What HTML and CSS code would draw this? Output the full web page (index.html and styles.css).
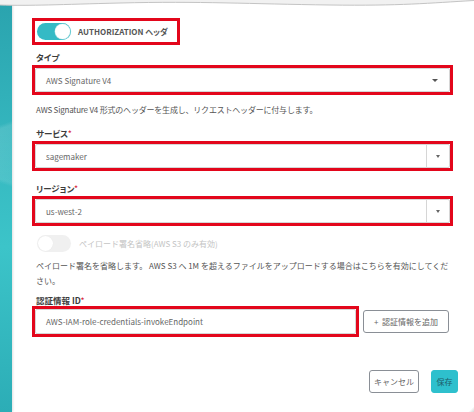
FILE: index.html
```html
<!DOCTYPE html>
<html lang="ja">
<head>
<meta charset="utf-8">
<link rel="stylesheet" href="styles.css">
</head>
<body>
<div class="page">
  <div class="strip"></div>
  <div class="main">
    <div class="hl toggle-box">
      <span class="toggle on"><span class="knob"></span></span>
      <span class="toggle-label">AUTHORIZATION ヘッダ</span>
    </div>

    <div class="field-label first">タイプ</div>
    <div class="hl">
      <div class="select">
        <span class="value">AWS Signature V4</span>
        <span class="caret"></span>
      </div>
    </div>
    <div class="desc one">AWS Signature V4 形式のヘッダーを生成し、リクエストヘッダーに付与します。</div>

    <div class="field-label">サービス<span class="req">*</span></div>
    <div class="hl">
      <div class="select split">
        <span class="value">sagemaker</span>
        <span class="arrow-cell"><span class="caret"></span></span>
      </div>
    </div>

    <div class="field-label">リージョン<span class="req">*</span></div>
    <div class="hl">
      <div class="select split">
        <span class="value">us-west-2</span>
        <span class="arrow-cell"><span class="caret"></span></span>
      </div>
    </div>

    <div class="toggle-row">
      <span class="toggle off"><span class="knob"></span></span>
      <span class="toggle-label disabled">ペイロード署名省略(AWS S3 のみ有効)</span>
    </div>
    <div class="desc two">ペイロード署名を省略します。 AWS S3 へ 1M を超えるファイルをアップロードする場合はこちらを有効にしてください。</div>

    <div class="field-label id">認証情報 ID<span class="req">*</span></div>
    <div class="id-row">
      <div class="hl id-box">
        <div class="select">
          <span class="value">AWS-IAM-role-credentials-invokeEndpoint</span>
        </div>
      </div>
      <button class="btn add">+&nbsp;&nbsp;認証情報を追加</button>
    </div>

    <div class="footer">
      <button class="btn">キャンセル</button>
      <button class="btn primary">保存</button>
    </div>
  </div>
  <svg class="edge" width="474" height="8" viewBox="0 0 474 8" preserveAspectRatio="none">
    <path d="M0,0 L474,0 L474,0.5 C430,3 400,6 330,5 C250,4 200,1 120,3 C60,4.5 30,6 0,5 Z" fill="#f1f1f1"/>
    <path d="M474,0.5 C430,3 400,6 330,5 C250,4 200,1 120,3 C60,4.5 30,6 0,5" fill="none" stroke="#c4c4c4" stroke-width="1"/>
  </svg>
  <div class="corner"></div>
</div>
</body>
</html>
```

FILE: styles.css
```css
* { box-sizing: border-box; }
html, body {
  margin: 0;
  padding: 0;
  background: #ffffff;
}
body {
  font-family: "Noto Sans CJK JP", "Noto Sans", sans-serif;
  color: #444;
}
.page {
  position: relative;
  display: flex;
  width: 474px;
  height: 412px;
  overflow: hidden;
}
.strip {
  width: 12px;
  flex: none;
  background:
    linear-gradient(160deg, rgba(255,255,255,0) 30%, rgba(255,255,255,0.12) 31%, rgba(255,255,255,0) 45%),
    linear-gradient(20deg, rgba(255,255,255,0) 55%, rgba(255,255,255,0.10) 56%, rgba(255,255,255,0) 70%),
    linear-gradient(180deg, #2aa3ae 0%, #35b7bf 35%, #3cc4c9 60%, #2cadb6 100%);
  box-shadow: 1px 0 2px rgba(0,0,0,0.12);
}
.main {
  flex: 1;
  display: flex;
  flex-direction: column;
  align-items: flex-start;
  padding: 18px 21px 0 20px;
}
.hl {
  border: 3px solid #e3061b;
  width: 421px;
}
.toggle-box {
  width: 148px;
  height: 27px;
  display: flex;
  align-items: center;
  padding-left: 2px;
  gap: 7px;
}
.toggle {
  position: relative;
  display: inline-block;
  width: 34px;
  height: 17px;
  border-radius: 9px;
  flex: none;
}
.toggle.on { background: #35bac5; }
.toggle.off { background: #f0f0f0; }
.knob {
  position: absolute;
  top: 1px;
  width: 15px;
  height: 15px;
  border-radius: 50%;
  background: #fff;
}
.toggle.on .knob { right: 1px; box-shadow: 0 0 0 0.5px #9bd9de; }
.toggle.off .knob { left: 1px; box-shadow: 0 0 1px rgba(0,0,0,0.08); }
.toggle-label {
  font-size: 8px;
  font-weight: bold;
  color: #555;
  white-space: nowrap;
  font-feature-settings: "palt";
}
.toggle-label.disabled {
  font-weight: normal;
  color: #c4c4c4;
  font-feature-settings: normal;
}
.field-label {
  font-size: 8.5px;
  font-weight: bold;
  line-height: 12px;
  color: #3c3c3c;
  margin: 11px 0 2px 4px;
  font-feature-settings: "palt";
}
.field-label.first { margin-top: 6px; }
.field-label.id { margin-top: 6px; margin-bottom: 0; }
.req { color: #d9263a; font-size: 7px; vertical-align: top; }
.select {
  position: relative;
  display: flex;
  align-items: center;
  height: 24px;
  border: 1px solid #d6d6d6;
  border-radius: 2px;
  background: #fff;
  padding-left: 10px;
  font-size: 8px;
  color: #666;
}
.value { flex: 1; white-space: nowrap; }
.caret {
  width: 0;
  height: 0;
  border-left: 3px solid transparent;
  border-right: 3px solid transparent;
  border-top: 3.5px solid #555;
  margin-right: 11px;
}
.select.split { padding-right: 0; }
.arrow-cell {
  align-self: stretch;
  width: 23px;
  border-left: 1px solid #d6d6d6;
  display: flex;
  align-items: center;
  justify-content: center;
}
.arrow-cell .caret { margin-right: 0; border-top-color: #666; border-left-width: 2.5px; border-right-width: 2.5px; border-top-width: 3px; }
.desc {
  font-size: 8px;
  color: #555;
  margin-left: 4px;
}
.desc.one { line-height: 12px; margin-top: 9px; letter-spacing: -0.2px; }
.desc.two { line-height: 15px; margin-top: 6px; width: 420px; }
.toggle-row {
  display: flex;
  align-items: center;
  gap: 8px;
  margin: 9px 0 0 5px;
}
.id-row {
  display: flex;
  align-items: center;
  gap: 4px;
}
.id-box { width: 327px; height: 31px; }
.id-box .select { height: 25px; }
.btn {
  font-family: "Noto Sans CJK JP", "Noto Sans", sans-serif;
  font-size: 8px;
  color: #666;
  background: #fff;
  border: 1px solid #8a8f96;
  border-radius: 3px;
  height: 23px;
  padding: 0;
  margin: 0;
}
.btn.add { width: 86px; }
.footer {
  align-self: flex-end;
  display: flex;
  gap: 12px;
  margin-top: 33px;
  margin-right: -2px;
}
.footer .btn { width: 50px; }
.footer .btn.primary {
  width: 27px;
  background: #2ec0cd;
  border-color: #2ec0cd;
  color: #1e5e6a;
}
.edge {
  position: absolute;
  left: 0;
  top: 0;
}
.corner {
  position: absolute;
  right: 0;
  bottom: 0;
  width: 6px;
  height: 6px;
  background: linear-gradient(135deg, rgba(255,255,255,0) 50%, #d4d4d4 100%);
}
```
